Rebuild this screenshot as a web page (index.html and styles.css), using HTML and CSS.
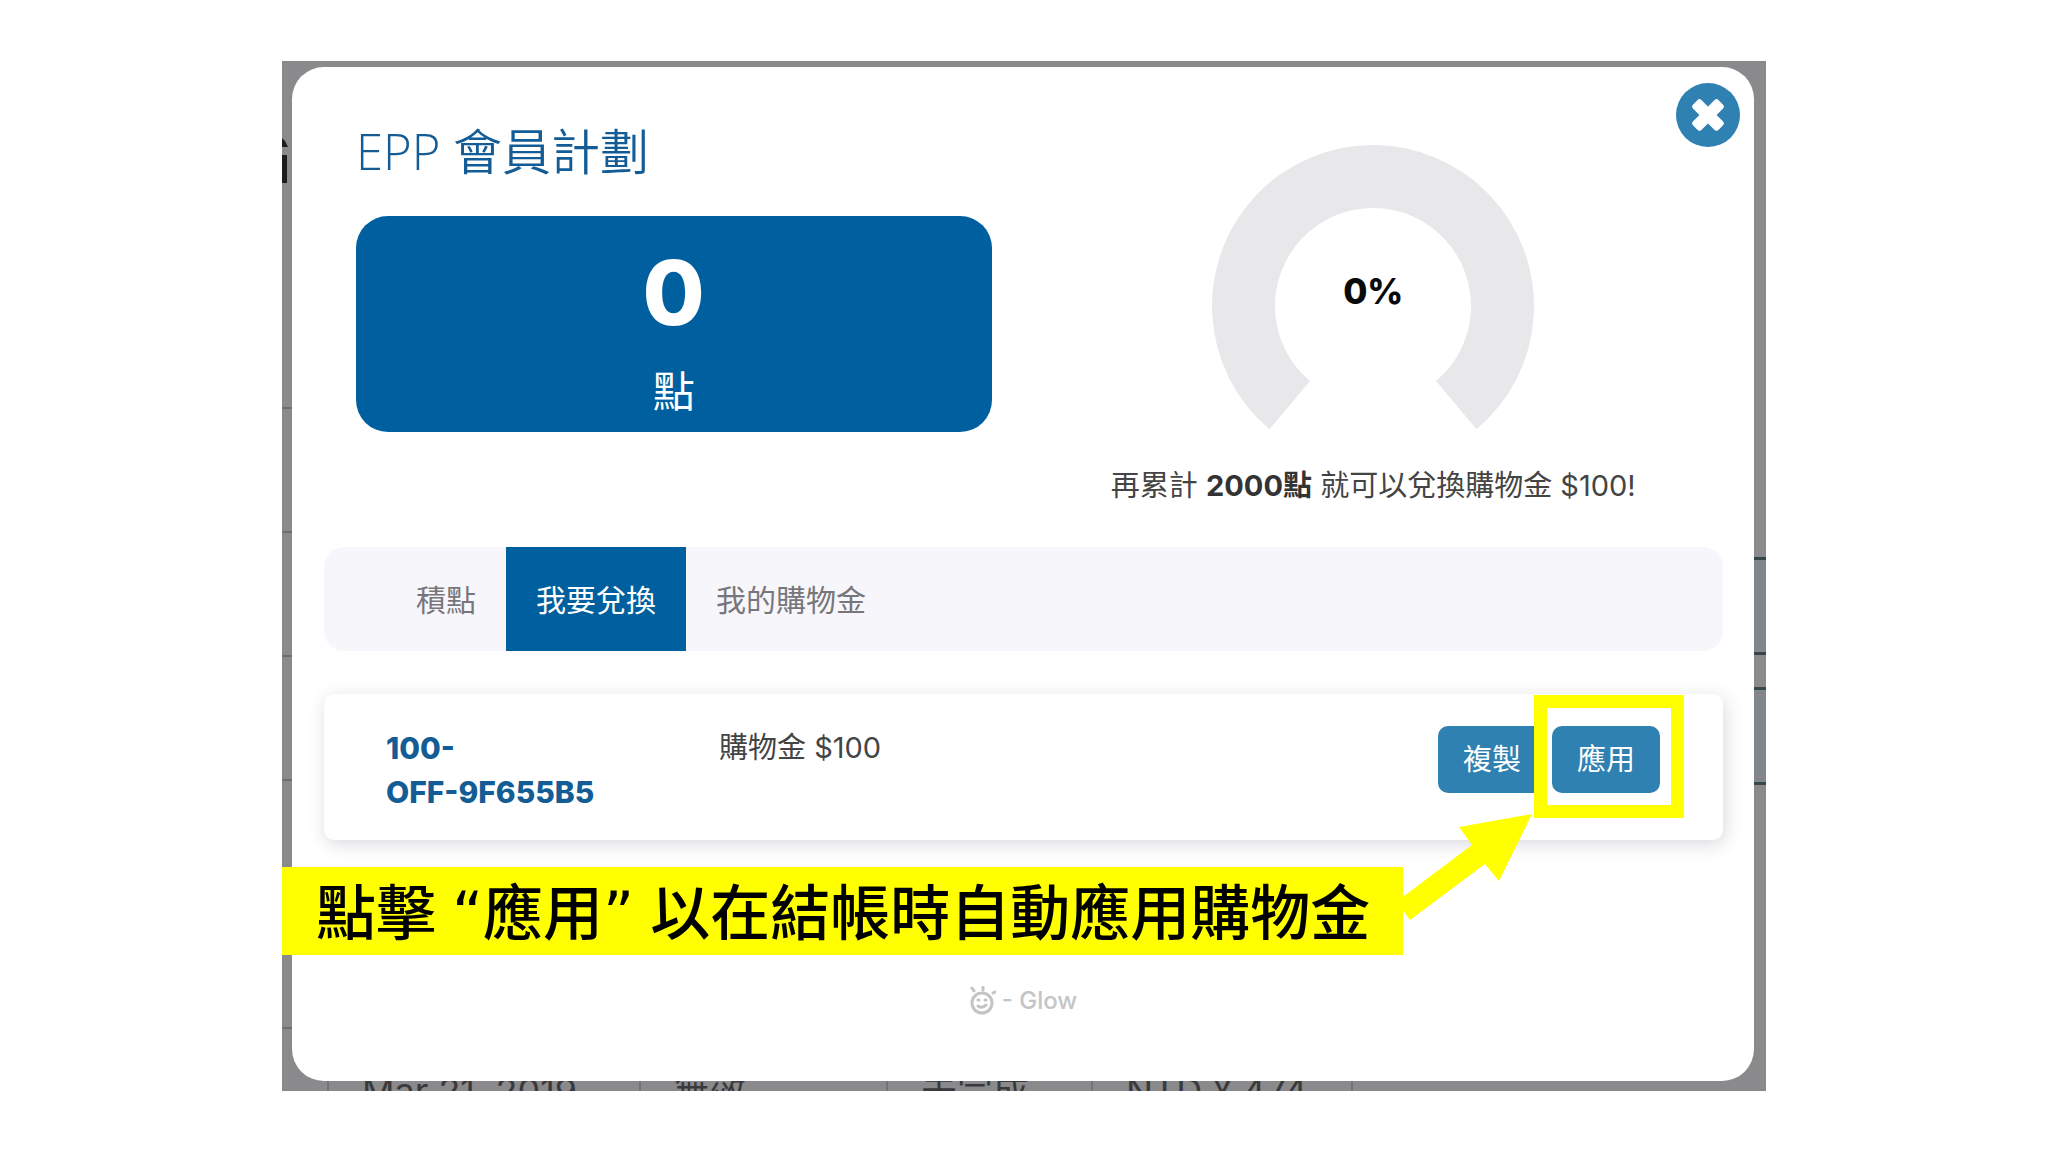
FILE: index.html
```html
<!DOCTYPE html>
<html lang="zh-Hant">
<head>
<meta charset="utf-8">
<title>EPP 會員計劃</title>
<link rel="stylesheet" href="styles.css">
</head>
<body>
<main class="stage">
  <div class="backdrop" aria-hidden="true">
    <div class="orders">
      <div class="order-row order-head"></div>
      <div class="order-row"></div>
      <div class="order-row"></div>
      <div class="order-row"></div>
      <div class="order-row"></div>
      <div class="order-row"></div>
      <div class="order-row order-last">
        <span></span><span>Mar 21, 2019</span><span>無效</span><span>未完成</span><span>NTD ¥ 474</span>
      </div>
    </div>
    <div class="fields"><div class="field"></div><div class="field"></div></div>
    <svg class="heading-edge" viewBox="0 0 6 46" width="6" height="46"><path d="M0 0 L3 3 L6 9 L0 9Z M0 17H5V45H0Z" fill="#1d1d1f"/></svg>
  </div>

  <section class="modal" role="dialog" aria-labelledby="title">
    <button class="close" type="button" aria-label="關閉">
      <svg viewBox="0 0 64 64" width="64" height="64" fill="#fff"><rect x="14" y="26" width="36" height="12" rx="3" transform="rotate(45 32 32)"/><rect x="14" y="26" width="36" height="12" rx="3" transform="rotate(-45 32 32)"/></svg>
    </button>

    <header class="summary">
      <div>
        <h1 class="title" id="title">EPP 會員計劃</h1>
        <div class="points">
          <strong class="points-value">0</strong>
          <span class="points-label">點</span>
        </div>
      </div>
      <div class="progress">
        <div class="gauge">
          <svg viewBox="0 0 322 285" width="322" height="285"><path d="M57.500 284.300 A161 161 0 1 1 264.500 284.300 L224 236.100 A98 98 0 1 0 98 236.100 Z" fill="#e8e8ea"/></svg>
          <strong class="gauge-value">0%</strong>
        </div>
        <p class="caption">再累計 <strong>2000點</strong> 就可以兌換購物金 $100!</p>
      </div>
    </header>

    <nav class="tabs">
      <button class="tab" type="button">積點</button>
      <button class="tab tab-active" type="button">我要兌換</button>
      <button class="tab" type="button">我的購物金</button>
    </nav>

    <article class="reward">
      <strong class="code">100-<br>OFF-9F655B5</strong>
      <span class="name">購物金 $100</span>
      <div class="actions">
        <button class="action" type="button">複製</button>
        <button class="action action-marked" type="button">應用</button>
      </div>
    </article>

    <footer class="brand">
      <svg viewBox="0 0 26 30" width="26" height="30" fill="none" stroke="#c4c4c6" stroke-width="2" stroke-linecap="round"><circle cx="12" cy="17" r="10" stroke-width="3"/><path d="M8 14h1M15 14h1M8 20q4 3 8-1M2 2l2 3M13 1v3M23 7l2-1" stroke-width="3"/></svg>
      <span>- Glow</span>
    </footer>
  </section>

  <p class="note">點擊 <span class="quote">“</span>應用<span class="quote">”</span> 以在結帳時自動應用購物金</p>
  <svg class="arrow" viewBox="0 0 134 110" width="134" height="110"><path d="M132 2 L99 69 L85 52 L10 108 L0 94 V87 L72 33 L59 15 Z" fill="#ff0"/></svg>
</main>
</body>
</html>
```
FILE: styles.css
```css
* { box-sizing: border-box; }

body {
  margin: 0;
  padding: 61px 282px;
  background: #fff;
  color: #444;
  font-family: Inter, "Noto Sans CJK TC", sans-serif;
  font-size: 29px;
  line-height: 44px;
}

h1, p { margin: 0; }

button {
  border: 0;
  font: inherit;
  cursor: pointer;
}

.stage {
  position: relative;
  padding: 6px 12px 10px 10px;
  background: #8a898b;
}

/* Dimmed page behind the dialog */
.backdrop {
  position: absolute;
  inset: 0;
  overflow: hidden;
  color: #3a3a3c;
}

.orders { width: 1071px; }
.order-row { height: 124px; border-bottom: 2px solid #6f6f71; }
.order-head { height: 348px; }

.order-last {
  display: grid;
  grid-template-columns: 47px 312px 247px 205px 1fr;
  border: 0;
  line-height: 124px;
}

.order-last span {
  padding-left: 33px;
  border-right: 2px solid #747476;
  font-size: 36px;
}

.fields {
  position: absolute;
  top: 496px;
  right: 0;
  width: 300px;
}

.field {
  height: 98px;
  margin-bottom: 32px;
  border: solid #34484c;
  border-width: 3px 0;
  background: #828889;
}

.heading-edge {
  position: absolute;
  left: 0;
  top: 77px;
}

.modal {
  position: relative;
  padding: 54px 31px 64px 32px;
  border-radius: 32px;
  background: #fff;
}

.close {
  position: absolute;
  top: 16px;
  right: 14px;
  width: 64px;
  height: 64px;
  padding: 0;
  border-radius: 50%;
  background: #2f81b1;
}

.close svg { display: block; }

.summary {
  display: grid;
  grid-template-columns: 1fr 1fr;
  gap: 64px;
  padding: 0 32px;
}

.title {
  margin-bottom: 35px;
  color: #135c95;
  font-family: "Open Sans", "Noto Sans CJK TC", sans-serif;
  font-size: 49px;
  font-weight: 350;
  line-height: 60px;
}

.points {
  display: flex;
  flex-direction: column;
  align-items: center;
  height: 216px;
  padding-top: 32px;
  border-radius: 32px;
  background: #00609f;
  color: #fff;
}

.points-value {
  font-size: 90px;
  font-weight: 800;
  line-height: 90px;
}

.points-label {
  margin-top: 24px;
  font-size: 42px;
  line-height: 60px;
}

.progress { padding-top: 24px; text-align: center; }

.gauge {
  display: grid;
  justify-items: center;
  margin-bottom: 34px;
}

.gauge > * { grid-area: 1 / 1; }

.gauge-value {
  padding-top: 124px;
  color: #0a0a0a;
  font-size: 35px;
  font-weight: 800;
}

.caption { white-space: nowrap; }
.caption strong { color: #333; }

.tabs {
  display: flex;
  height: 104px;
  margin-top: 39px;
  padding-left: 62px;
  border-radius: 20px;
  background: #f7f6fa;
}

.tab {
  padding: 2px 30px 0;
  background: none;
  color: #77767a;
  font-size: 30px;
}

.tab-active { background: #00609f; color: #fff; }

.reward {
  display: flex;
  height: 146px;
  margin-top: 43px;
  padding: 32px 63px 0 62px;
  border-radius: 10px;
  background: #fff;
  box-shadow: 2px 4px 18px rgba(70, 60, 90, .2);
}

.code {
  width: 333px;
  color: #135c95;
  font-size: 30px;
  font-weight: 800;
}

.actions {
  display: flex;
  gap: 6px;
  height: 67px;
  margin-left: auto;
}

.action {
  padding: 0 25px;
  border-radius: 10px;
  background: #2f81b1;
  color: #fff;
}

.action-marked { position: relative; }

.action-marked::after {
  content: "";
  position: absolute;
  inset: -31px -24px -25px -18px;
  border: 13px solid #ff0;
}

.brand {
  display: flex;
  align-items: center;
  justify-content: center;
  gap: 6px;
  margin-top: 145px;
  color: #c4c4c6;
  font-size: 24px;
  font-weight: 500;
  line-height: 32px;
}

/* Tutorial annotations over the dialog */
.note {
  position: absolute;
  left: 0;
  top: 806px;
  width: 1121px;
  height: 88px;
  padding: 2px 0 0 34px;
  background: #ff0;
  color: #000;
  font-size: 60px;
  font-weight: 500;
  line-height: 88px;
  white-space: nowrap;
}

.quote { font-family: "DejaVu Sans", sans-serif; line-height: 1; }

.arrow {
  position: absolute;
  left: 1118px;
  top: 751px;
}
```
